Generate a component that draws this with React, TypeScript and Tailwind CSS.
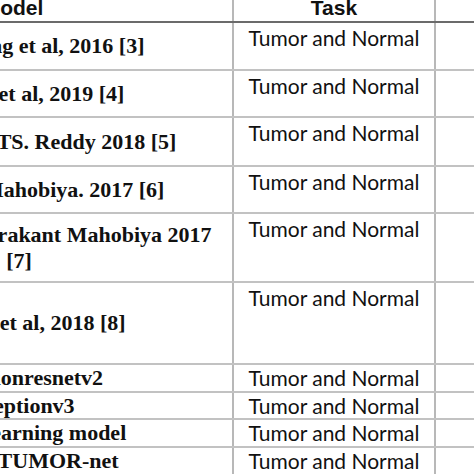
import React from 'react';

type Row = { model: string; task: string; h: string; pt: string };

const rows: Row[] = [
    { model: 'Yu D. Zhang et al, 2016 [3]', task: 'Tumor and Normal', h: 'h-[48px]', pt: 'pt-[4px]' },
    { model: 'Rehman et al, 2019 [4]', task: 'Tumor and Normal', h: 'h-[47px]', pt: 'pt-[4px]' },
    { model: 'A Hebli & Dr. TS. Reddy 2018 [5]', task: 'Tumor and Normal', h: 'h-[49px]', pt: 'pt-[4px]' },
    { model: 'A Hebli, C. Mahobiya. 2017 [6]', task: 'Tumor and Normal', h: 'h-[47px]', pt: 'pt-[4px]' },
    { model: 'A. Hebli & Chandrakant Mahobiya 2017 [7]', task: 'Tumor and Normal', h: 'h-[69px]', pt: 'pt-[4px]' },
    { model: 'Hussaini et al, 2018 [8]', task: 'Tumor and Normal', h: 'h-[82px]', pt: 'pt-[4px]' },
    { model: 'Inceptionresnetv2', task: 'Tumor and Normal', h: 'h-[28px]', pt: 'pt-[2px]' },
    { model: 'Inceptionv3', task: 'Tumor and Normal', h: 'h-[27px]', pt: 'pt-[2px]' },
    { model: 'A Deep learning model', task: 'Tumor and Normal', h: 'h-[28px]', pt: 'pt-[2px]' },
    { model: 'BRAIN-TUMOR-net', task: 'Tumor and Normal', h: 'h-[28px]', pt: 'pt-[2px]' },
];

const App: React.FC = () => {
    return (
        <div className="w-[474px] h-[474px] overflow-hidden bg-white text-[#111]">
            <div className="ml-[-194px] w-[900px]">
                {/* header */}
                <div className="flex h-[23px] border-b-2 border-[#6b6b6b]">
                    <div className="w-[428px] shrink-0 border-r-2 border-[#b8b8b8] pl-[8px] pr-[20px] text-center font-['Liberation_Sans',sans-serif] font-bold text-[21px] leading-[16px]">
                        Model
                    </div>
                    <div className="w-[202px] shrink-0 border-r-2 border-[#b8b8b8] text-center font-['Liberation_Sans',sans-serif] font-bold text-[21px] leading-[16px]">
                        Task
                    </div>
                    <div className="flex-1" />
                </div>

                {rows.map((row, i) => (
                    <div key={i} className={`flex ${row.h} border-b-2 border-[#c2c2c2]`}>
                        <div className="w-[428px] shrink-0 border-r-2 border-[#b8b8b8] px-[8px] flex items-center justify-center text-center font-['Liberation_Serif',serif] font-bold text-[22px] leading-[26px]">
                            {row.model}
                        </div>
                        <div className={`w-[202px] shrink-0 border-r-2 border-[#b8b8b8] ${row.pt} text-center font-['Lato',sans-serif] text-[21px] leading-[21px]`}>
                            {row.task}
                        </div>
                        <div className="flex-1" />
                    </div>
                ))}
            </div>
        </div>
    );
};

export default App;
